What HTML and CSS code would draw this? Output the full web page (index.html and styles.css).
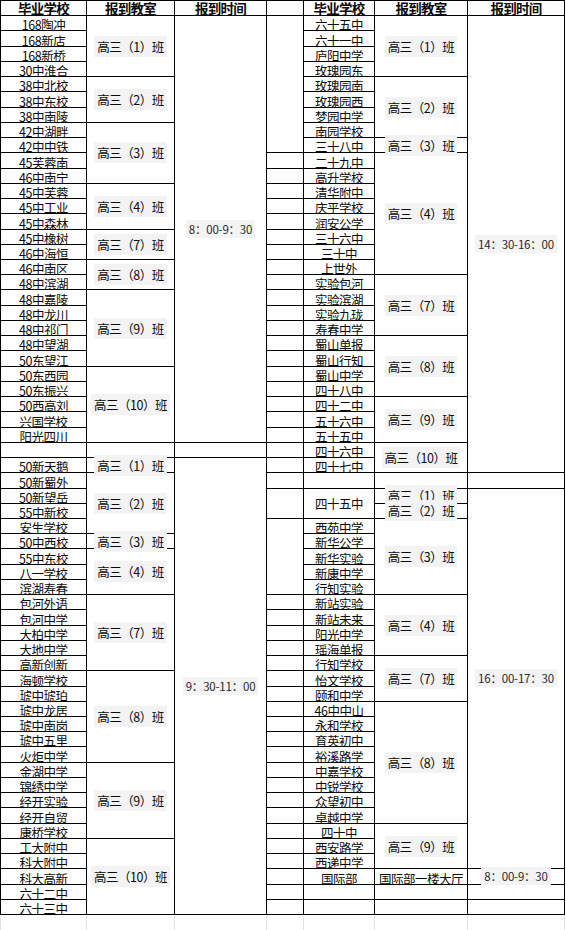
FILE: index.html
```html
<!DOCTYPE html>
<html lang="zh-CN">
<head>
<meta charset="utf-8">
<title>报到安排</title>
<link rel="stylesheet" href="styles.css">
</head>
<body>
<table class="sheet">
<colgroup>
<col class="c-school"><col class="c-class"><col class="c-time"><col class="c-gap"><col class="c-school2"><col class="c-class2"><col class="c-time2">
</colgroup>
<tbody>
<tr class="hd"><th>毕业学校</th><th>报到教室</th><th>报到时间</th><th class="gap"></th><th>毕业学校</th><th>报到教室</th><th>报到时间</th></tr>
<tr><td class="sc"><div>168陶冲</div></td><td class="cls" rowspan="4"><span>高三（1）班</span></td><td class="tm" rowspan="28"><span>8：00-9：30</span></td><td class="gap" rowspan="9"></td><td class="sc"><div>六十五中</div></td><td class="cls" rowspan="4"><span>高三（1）班</span></td><td class="tm" rowspan="30"><span>14：30-16：00</span></td></tr>
<tr><td class="sc"><div>168新店</div></td><td class="sc"><div>六十一中</div></td></tr>
<tr><td class="sc"><div>168新桥</div></td><td class="sc"><div>庐阳中学</div></td></tr>
<tr><td class="sc"><div>30中淮合</div></td><td class="sc"><div>玫瑰园东</div></td></tr>
<tr><td class="sc"><div>38中北校</div></td><td class="cls" rowspan="3"><span>高三（2）班</span></td><td class="sc"><div>玫瑰园南</div></td><td class="cls" rowspan="4"><span>高三（2）班</span></td></tr>
<tr><td class="sc"><div>38中东校</div></td><td class="sc"><div>玫瑰园西</div></td></tr>
<tr><td class="sc"><div>38中南陵</div></td><td class="sc"><div>梦园中学</div></td></tr>
<tr><td class="sc"><div>42中湖畔</div></td><td class="cls" rowspan="4"><span>高三（3）班</span></td><td class="sc"><div>南园学校</div></td></tr>
<tr><td class="sc"><div>42中中铁</div></td><td class="sc"><div>三十八中</div></td><td class="cls"><span>高三（3）班</span></td></tr>
<tr><td class="sc"><div>45芙蓉南</div></td><td class="gap"></td><td class="sc"><div>二十九中</div></td><td class="cls" rowspan="8"><span>高三（4）班</span></td></tr>
<tr><td class="sc"><div>46中南宁</div></td><td class="gap"></td><td class="sc"><div>高升学校</div></td></tr>
<tr><td class="sc"><div>45中芙蓉</div></td><td class="cls" rowspan="3"><span>高三（4）班</span></td><td class="gap"></td><td class="sc"><div>清华附中</div></td></tr>
<tr><td class="sc"><div>45中工业</div></td><td class="gap"></td><td class="sc"><div>庆平学校</div></td></tr>
<tr><td class="sc"><div>45中森林</div></td><td class="gap"></td><td class="sc"><div>润安公学</div></td></tr>
<tr><td class="sc"><div>45中橡树</div></td><td class="cls" rowspan="2"><span>高三（7）班</span></td><td class="gap"></td><td class="sc"><div>三十六中</div></td></tr>
<tr><td class="sc"><div>46中海恒</div></td><td class="gap"></td><td class="sc"><div>三十中</div></td></tr>
<tr><td class="sc"><div>46中南区</div></td><td class="cls" rowspan="2"><span>高三（8）班</span></td><td class="gap"></td><td class="sc"><div>上世外</div></td></tr>
<tr><td class="sc"><div>48中滨湖</div></td><td class="gap"></td><td class="sc"><div>实验包河</div></td><td class="cls" rowspan="4"><span>高三（7）班</span></td></tr>
<tr><td class="sc"><div>48中嘉陵</div></td><td class="cls" rowspan="5"><span>高三（9）班</span></td><td class="gap"></td><td class="sc"><div>实验滨湖</div></td></tr>
<tr><td class="sc"><div>48中龙川</div></td><td class="gap"></td><td class="sc"><div>实验九珑</div></td></tr>
<tr><td class="sc"><div>48中祁门</div></td><td class="gap"></td><td class="sc"><div>寿春中学</div></td></tr>
<tr><td class="sc"><div>48中望湖</div></td><td class="gap"></td><td class="sc"><div>蜀山单报</div></td><td class="cls" rowspan="4"><span>高三（8）班</span></td></tr>
<tr><td class="sc"><div>50东望江</div></td><td class="gap"></td><td class="sc"><div>蜀山行知</div></td></tr>
<tr><td class="sc"><div>50东西园</div></td><td class="cls" rowspan="5"><span>高三（10）班</span></td><td class="gap"></td><td class="sc"><div>蜀山中学</div></td></tr>
<tr><td class="sc"><div>50东振兴</div></td><td class="gap"></td><td class="sc"><div>四十八中</div></td></tr>
<tr><td class="sc"><div>50西高刘</div></td><td class="gap"></td><td class="sc"><div>四十二中</div></td><td class="cls" rowspan="3"><span>高三（9）班</span></td></tr>
<tr><td class="sc"><div>兴国学校</div></td><td class="gap"></td><td class="sc"><div>五十六中</div></td></tr>
<tr><td class="sc"><div>阳光四川</div></td><td class="gap"></td><td class="sc"><div>五十五中</div></td></tr>
<tr><td class="sc"></td><td class="cls"></td><td class="tm"></td><td class="gap"></td><td class="sc"><div>四十六中</div></td><td class="cls" rowspan="2"><span>高三（10）班</span></td></tr>
<tr><td class="sc"><div>50新天鹅</div></td><td class="cls"><span>高三（1）班</span></td><td class="tm" rowspan="30"><span>9：30-11：00</span></td><td class="gap"></td><td class="sc"><div>四十七中</div></td></tr>
<tr><td class="sc"><div>50新蜀外</div></td><td class="cls" rowspan="4"><span>高三（2）班</span></td><td class="gap"></td><td class="sc"></td><td class="cls"></td><td class="tm"></td></tr>
<tr><td class="sc"><div>50新望岳</div></td><td class="gap" rowspan="2"></td><td class="mid" rowspan="2"><span>四十五中</span></td><td class="cls"><span>高三（1）班</span></td><td class="tm" rowspan="25"><span>16：00-17：30</span></td></tr>
<tr><td class="sc"><div>55中新校</div></td><td class="cls"><span>高三（2）班</span></td></tr>
<tr><td class="sc"><div>安生学校</div></td><td class="gap" rowspan="5"></td><td class="sc"><div>西苑中学</div></td><td class="cls" rowspan="5"><span>高三（3）班</span></td></tr>
<tr><td class="sc"><div>50中西校</div></td><td class="cls"><span>高三（3）班</span></td><td class="sc"><div>新华公学</div></td></tr>
<tr><td class="sc"><div>55中东校</div></td><td class="cls" rowspan="3"><span>高三（4）班</span></td><td class="sc"><div>新华实验</div></td></tr>
<tr><td class="sc"><div>八一学校</div></td><td class="sc"><div>新康中学</div></td></tr>
<tr><td class="sc"><div>滨湖寿春</div></td><td class="sc"><div>行知实验</div></td></tr>
<tr><td class="sc"><div>包河外语</div></td><td class="cls" rowspan="5"><span>高三（7）班</span></td><td class="gap"></td><td class="sc"><div>新站实验</div></td><td class="cls" rowspan="4"><span>高三（4）班</span></td></tr>
<tr><td class="sc"><div>包河中学</div></td><td class="gap"></td><td class="sc"><div>新站未来</div></td></tr>
<tr><td class="sc"><div>大柏中学</div></td><td class="gap"></td><td class="sc"><div>阳光中学</div></td></tr>
<tr><td class="sc"><div>大地中学</div></td><td class="gap"></td><td class="sc"><div>瑶海单报</div></td></tr>
<tr><td class="sc"><div>高新创新</div></td><td class="gap"></td><td class="sc"><div>行知学校</div></td><td class="cls" rowspan="3"><span>高三（7）班</span></td></tr>
<tr><td class="sc"><div>海顿学校</div></td><td class="cls" rowspan="6"><span>高三（8）班</span></td><td class="gap"></td><td class="sc"><div>怡文学校</div></td></tr>
<tr><td class="sc"><div>琥中琥珀</div></td><td class="gap"></td><td class="sc"><div>颐和中学</div></td></tr>
<tr><td class="sc"><div>琥中龙居</div></td><td class="gap"></td><td class="sc"><div>46中中山</div></td><td class="cls" rowspan="8"><span>高三（8）班</span></td></tr>
<tr><td class="sc"><div>琥中南岗</div></td><td class="gap"></td><td class="sc"><div>永和学校</div></td></tr>
<tr><td class="sc"><div>琥中五里</div></td><td class="gap"></td><td class="sc"><div>育英初中</div></td></tr>
<tr><td class="sc"><div>火炬中学</div></td><td class="gap"></td><td class="sc"><div>裕溪路学</div></td></tr>
<tr><td class="sc"><div>金湖中学</div></td><td class="cls" rowspan="5"><span>高三（9）班</span></td><td class="gap"></td><td class="sc"><div>中嘉学校</div></td></tr>
<tr><td class="sc"><div>锦绣中学</div></td><td class="gap"></td><td class="sc"><div>中锐学校</div></td></tr>
<tr><td class="sc"><div>经开实验</div></td><td class="gap"></td><td class="sc"><div>众望初中</div></td></tr>
<tr><td class="sc"><div>经开自贸</div></td><td class="gap"></td><td class="sc"><div>卓越中学</div></td></tr>
<tr><td class="sc"><div>康桥学校</div></td><td class="gap"></td><td class="sc"><div>四十中</div></td><td class="cls" rowspan="3"><span>高三（9）班</span></td></tr>
<tr><td class="sc"><div>工大附中</div></td><td class="cls" rowspan="5"><span>高三（10）班</span></td><td class="gap"></td><td class="sc"><div>西安路学</div></td></tr>
<tr><td class="sc"><div>科大附中</div></td><td class="gap"></td><td class="sc"><div>西递中学</div></td></tr>
<tr><td class="sc"><div>科大高新</div></td><td class="gap"></td><td class="sc"><div>国际部</div></td><td class="sc"><div>国际部一楼大厅</div></td><td class="tm"><span>8：00-9：30</span></td></tr>
<tr><td class="sc"><div>六十二中</div></td><td class="gap"></td><td class="sc"></td><td class="cls"></td><td class="tm"></td></tr>
<tr><td class="sc"><div>六十三中</div></td><td class="gap"></td><td class="sc"></td><td class="cls"></td><td class="tm"></td></tr>
<tr class="ghost"><td></td><td></td><td></td><td></td><td></td><td></td><td></td></tr>
</tbody>
</table>
</body>
</html>
```

FILE: styles.css
```css
html, body {
  margin: 0;
  padding: 0;
  background: #ffffff;
}

body {
  font-family: "Noto Sans CJK SC", "Noto Sans", sans-serif;
  color: #0a0a0a;
  overflow: hidden;
}

.sheet {
  border-collapse: collapse;
  table-layout: fixed;
  width: 564px;
}

.c-school { width: 86px; }
.c-class { width: 88px; }
.c-time { width: 92px; }
.c-gap { width: 37px; }
.c-school2 { width: 71px; }
.c-class2 { width: 93px; }
.c-time2 { width: 97px; }

.sheet tr {
  height: 15.24px;
}

.sheet th,
.sheet td {
  border: 1px solid #000;
  padding: 0;
  overflow: visible;
  white-space: nowrap;
}

.hd th {
  font-size: 13.5px;
  font-weight: 700;
  line-height: 13px;
  text-align: center;
  vertical-align: bottom;
  letter-spacing: -0.8px;
}

.sc {
  text-align: center;
  vertical-align: bottom;
  font-size: 12.5px;
  letter-spacing: -0.5px;
}

.sc div {
  line-height: 12px;
  margin-bottom: -1px;
}

.mid {
  text-align: center;
  vertical-align: middle;
  font-size: 12.5px;
  letter-spacing: -0.5px;
}

.cls {
  text-align: center;
  vertical-align: middle;
  font-size: 12.5px;
  letter-spacing: -0.5px;
  line-height: 13px;
}

.cls span,
.tm span {
  background: #f3f3f3;
  padding: 1px 3px;
}

.tm {
  text-align: center;
  vertical-align: middle;
  font-size: 11.5px;
  color: #2a2a2a;
  line-height: 12px;
  letter-spacing: -0.2px;
}

.ghost {
  height: 16px;
}

.sheet .ghost td {
  border-top: 1px solid #000;
  border-bottom: none;
  border-left: 1px solid #e4e4e4;
  border-right: 1px solid #e4e4e4;
}
```
